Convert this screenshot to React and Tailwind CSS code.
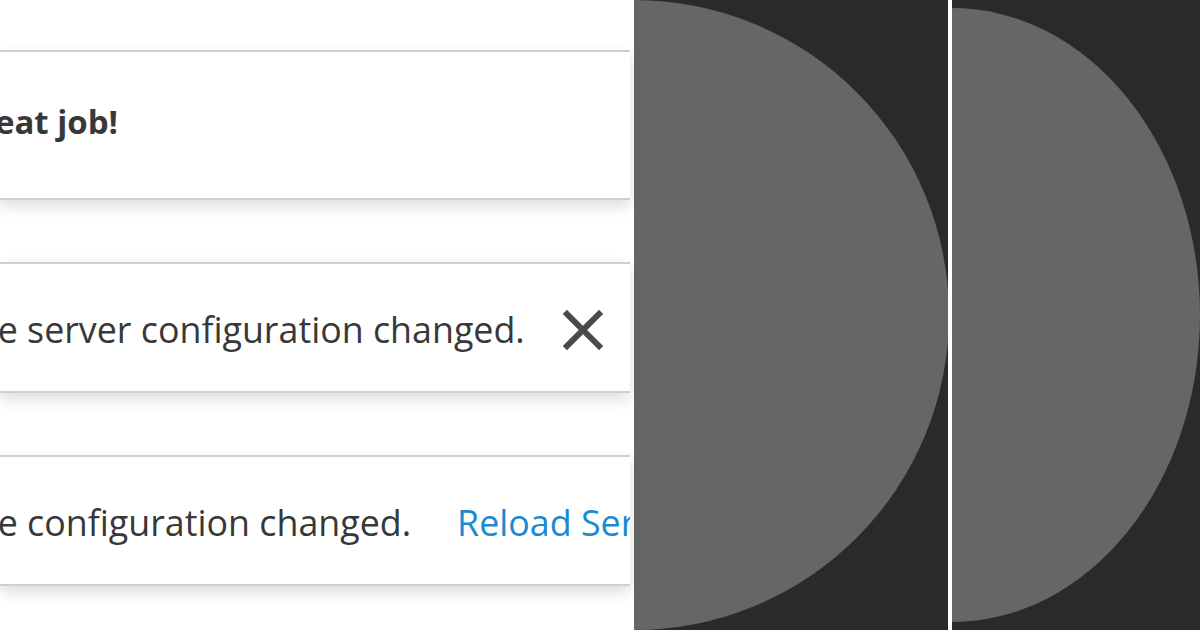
import React from "react";

function Card({ h, children }) {
  return (
    <div
      className="relative flex items-center bg-white border-y-2 border-[#cfcfcf] shadow-[0_6px_14px_rgba(0,0,0,0.14)] overflow-hidden mr-[4px]"
      style={{ height: h }}
    >
      {children}
    </div>
  );
}

export default function App() {
  return (
    <div
      className="flex w-[1200px] h-[630px] overflow-hidden bg-white"
      style={{ fontFamily: '"Open Sans", "Liberation Sans", sans-serif' }}
    >
      <div className="w-[634px] shrink-0 bg-white flex flex-col pt-[50px] gap-[62px]">
        <Card h={150}>
          <div className="ml-[-44px] whitespace-nowrap text-[33px] font-bold text-[#383838] mt-[-7px]">
            Great job!
          </div>
        </Card>
        <Card h={131}>
          <div className="ml-[-44px] mt-[5px] flex items-center whitespace-nowrap">
            <span className="text-[35.8px] text-[#383838]">The server configuration changed.</span>
            <svg width="40" height="40" viewBox="0 0 40 40" className="ml-[38px]">
              <path d="M4 4 L36 36 M36 4 L4 36" stroke="#4a4a4a" strokeWidth="6" strokeLinecap="square" fill="none" />
            </svg>
          </div>
        </Card>
        <Card h={131}>
          <div className="ml-[-44px] mt-[5px] flex items-center whitespace-nowrap">
            <span className="text-[35.8px] text-[#383838]">The configuration changed.</span>
            <span className="text-[35.8px] text-[#1b8ad0] ml-[46px]">Reload Server</span>
          </div>
        </Card>
      </div>
      <div className="w-[314px] shrink-0 h-full bg-[#2a2a2a]">
        <svg width="314" height="630" viewBox="0 0 314 630">
          <ellipse cx="0" cy="315" rx="315" ry="315" fill="#666666" />
        </svg>
      </div>
      <div className="w-[4px] shrink-0 h-full bg-white" />
      <div className="flex-1 h-full bg-[#2a2a2a]">
        <svg width="248" height="630" viewBox="0 0 248 630">
          <ellipse cx="0" cy="315" rx="248" ry="307" fill="#666666" />
        </svg>
      </div>
    </div>
  );
}
